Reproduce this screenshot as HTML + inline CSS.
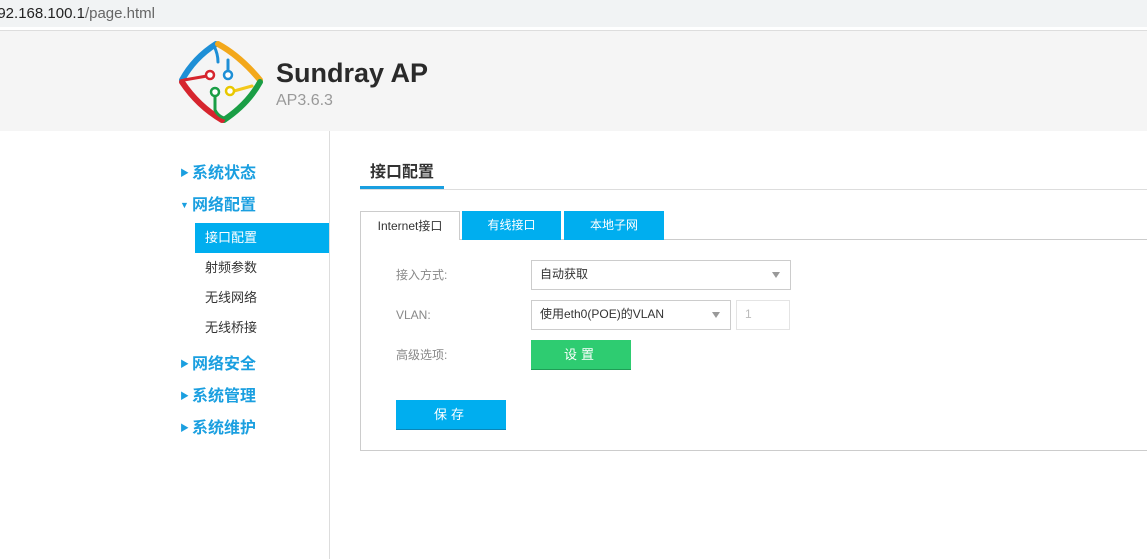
<!DOCTYPE html>
<html><head><meta charset="utf-8"><style>
*{margin:0;padding:0;box-sizing:border-box}
body{width:1147px;height:559px;overflow:hidden;background:#fff;font-family:"Liberation Sans","Noto Sans CJK SC",sans-serif;position:relative}
.a{position:absolute}
.url{left:0;top:0;width:1147px;height:27px;background:#f1f3f4;font-size:15px;line-height:27px;color:#222;white-space:nowrap}
.hdr{left:0;top:30px;width:1147px;height:101px;background:#f5f5f5;border-top:1px solid #ddd}
.m{left:180px;font-size:16px;font-weight:bold;color:#1a9fe0;line-height:20px}
.m span{display:inline-block;width:12px;font-size:9px;vertical-align:2px}
.s{left:205px;font-size:13px;color:#333;line-height:18px}
.lbl{left:396px;font-size:12px;color:#888;line-height:16px}
.sel{border:1px solid #ccc;background:#fff;font-size:12px;color:#333;padding-left:8px;line-height:27px}
.sel i{position:absolute;right:10px;top:11px;border-left:4px solid transparent;border-right:4px solid transparent;border-top:6px solid #999}
.btn{color:#fff;font-size:13px;text-align:center;line-height:29px;letter-spacing:4px}
</style></head><body>
<div class="a url"><span style="margin-left:-11px">192.168.100.1</span><span style="color:#666">/page.html</span></div>
<div class="a hdr"></div>
<svg class="a" style="left:178px;top:40px" width="86" height="84" viewBox="0 0 86 84">
<g fill="none" stroke-linecap="round">
<path d="M4 40 Q16 18 38 4" stroke="#1e8fd6" stroke-width="6"/>
<path d="M40 4 Q62 16 82 40" stroke="#f3a81b" stroke-width="6"/>
<path d="M82 42 Q70 64 46 80" stroke="#1a9e45" stroke-width="6"/>
<path d="M44 80 Q20 66 4 42" stroke="#d6252e" stroke-width="6"/>
<path d="M36 6 Q40 14 40 22" stroke="#1e8fd6" stroke-width="3"/>
<path d="M50 20 L50 31" stroke="#1e8fd6" stroke-width="3"/>
<path d="M6 40 L29 36" stroke="#d6252e" stroke-width="3"/>
<path d="M56 51 L74 46" stroke="#f3c81b" stroke-width="3"/>
<path d="M37 56 L37 70 Q40 76 46 78" stroke="#1a9e45" stroke-width="3"/>
</g>
<circle cx="32" cy="35" r="4" fill="#fff" stroke="#d6252e" stroke-width="2.5"/>
<circle cx="50" cy="35" r="4" fill="#fff" stroke="#1e8fd6" stroke-width="2.5"/>
<circle cx="37" cy="52" r="4" fill="#fff" stroke="#1a9e45" stroke-width="2.5"/>
<circle cx="52" cy="51" r="4" fill="#fff" stroke="#e8c800" stroke-width="2.5"/>
</svg>
<div class="a" style="left:276px;top:56px;font-size:27px;font-weight:bold;color:#2a2a2a;line-height:34px">Sundray AP</div>
<div class="a" style="left:276px;top:91px;font-size:16px;color:#999;line-height:20px">AP3.6.3</div>
<div class="a" style="left:329px;top:131px;width:1px;height:428px;background:#ddd"></div>
<div class="a m" style="top:163px"><span>▶</span>系统状态</div>
<div class="a m" style="top:195px"><span>▼</span>网络配置</div>
<div class="a" style="left:195px;top:223px;width:134px;height:30px;background:#00aeef;color:#fff;font-size:13px;line-height:30px;padding-left:10px">接口配置</div>
<div class="a s" style="top:259px">射频参数</div>
<div class="a s" style="top:289px">无线网络</div>
<div class="a s" style="top:319px">无线桥接</div>
<div class="a m" style="top:354px"><span>▶</span>网络安全</div>
<div class="a m" style="top:386px"><span>▶</span>系统管理</div>
<div class="a m" style="top:418px"><span>▶</span>系统维护</div>
<div class="a" style="left:370px;top:163px;font-size:16px;font-weight:bold;color:#333;line-height:20px">接口配置</div>
<div class="a" style="left:360px;top:189px;width:787px;height:1px;background:#ddd"></div>
<div class="a" style="left:360px;top:186px;width:84px;height:3px;background:#1a9fe0"></div>
<div class="a" style="left:360px;top:239px;width:800px;height:212px;border:1px solid #ccc"></div>
<div class="a" style="left:360px;top:211px;width:100px;height:29px;background:#fff;border:1px solid #ccc;border-bottom:none;font-size:12px;color:#333;text-align:center;line-height:28px">Internet接口</div>
<div class="a" style="left:462px;top:211px;width:99px;height:29px;background:#00aeef;color:#fff;font-size:12px;text-align:center;line-height:28px">有线接口</div>
<div class="a" style="left:564px;top:211px;width:100px;height:29px;background:#00aeef;color:#fff;font-size:12px;text-align:center;line-height:28px">本地子网</div>
<div class="a lbl" style="top:267px">接入方式:</div>
<div class="a lbl" style="top:307px">VLAN:</div>
<div class="a lbl" style="top:347px">高级选项:</div>
<div class="a sel" style="left:531px;top:260px;width:260px;height:30px">自动获取<i></i></div>
<div class="a sel" style="left:531px;top:300px;width:200px;height:30px">使用eth0(POE)的VLAN<i></i></div>
<div class="a sel" style="left:736px;top:300px;width:54px;height:30px;border-color:#e4e4e4;color:#bbb">1</div>
<div class="a btn" style="left:531px;top:340px;width:100px;height:30px;background:#2ecc71;border-bottom:1px solid #1f9e56">设置</div>
<div class="a btn" style="left:396px;top:400px;width:110px;height:30px;background:#00aeef;border-bottom:1px solid #0a86b8">保存</div>
</body></html>
